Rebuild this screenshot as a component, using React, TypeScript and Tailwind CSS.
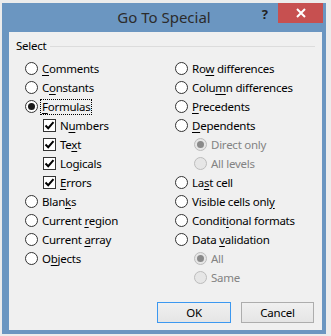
import React from 'react';

type Item = {
  label: string;
  key?: number; // index of the underlined access key
  kind: 'radio' | 'check';
  checked?: boolean;
  disabled?: boolean;
  sub?: boolean;
  focus?: boolean;
};

const leftItems: Item[] = [
  { label: 'Comments', key: 0, kind: 'radio' },
  { label: 'Constants', key: 1, kind: 'radio' },
  { label: 'Formulas', key: 0, kind: 'radio', checked: true, focus: true },
  { label: 'Numbers', key: 1, kind: 'check', checked: true, sub: true },
  { label: 'Text', key: 2, kind: 'check', checked: true, sub: true },
  { label: 'Logicals', key: 2, kind: 'check', checked: true, sub: true },
  { label: 'Errors', key: 0, kind: 'check', checked: true, sub: true },
  { label: 'Blanks', key: 4, kind: 'radio' },
  { label: 'Current region', key: 8, kind: 'radio' },
  { label: 'Current array', key: 8, kind: 'radio' },
  { label: 'Objects', key: 1, kind: 'radio' },
];

const rightItems: Item[] = [
  { label: 'Row differences', key: 2, kind: 'radio' },
  { label: 'Column differences', key: 4, kind: 'radio' },
  { label: 'Precedents', key: 0, kind: 'radio' },
  { label: 'Dependents', key: 0, kind: 'radio' },
  { label: 'Direct only', kind: 'radio', checked: true, disabled: true, sub: true },
  { label: 'All levels', kind: 'radio', disabled: true, sub: true },
  { label: 'Last cell', key: 2, kind: 'radio' },
  { label: 'Visible cells only', key: 17, kind: 'radio' },
  { label: 'Conditional formats', key: 6, kind: 'radio' },
  { label: 'Data validation', key: 5, kind: 'radio' },
  { label: 'All', kind: 'radio', checked: true, disabled: true, sub: true },
  { label: 'Same', kind: 'radio', disabled: true, sub: true },
];

const Radio = ({ checked, disabled }: { checked?: boolean; disabled?: boolean }) => (
  <span
    className={`w-[13px] h-[13px] rounded-full border flex items-center justify-center shrink-0 ${
      disabled ? 'border-[#bcbcbc] bg-[#e6e6e6]' : 'border-[#333333] bg-white'
    }`}
  >
    {checked && (
      <span className={`w-[7px] h-[7px] rounded-full ${disabled ? 'bg-[#8a8a8a]' : 'bg-[#1a1a1a]'}`} />
    )}
  </span>
);

const Check = ({ checked }: { checked?: boolean }) => (
  <span className="w-[13px] h-[13px] border border-[#333333] bg-white flex items-center justify-center shrink-0">
    {checked && (
      <svg width="11" height="11" viewBox="0 0 11 11">
        <path d="M1.5 5.5 L4.2 8.2 L9.5 2.2" fill="none" stroke="#000" strokeWidth="2" />
      </svg>
    )}
  </span>
);

const Label = ({ item }: { item: Item }) => {
  const { label, key } = item;
  const text =
    key === undefined ? (
      label
    ) : (
      <>
        {label.slice(0, key)}
        <u className="underline underline-offset-2">{label[key]}</u>
        {label.slice(key + 1)}
      </>
    );
  return (
    <span
      className={`ml-[2px] px-[1px] border leading-[14px] whitespace-nowrap ${
        item.focus ? 'border-dotted border-black' : 'border-transparent'
      } ${item.disabled ? 'text-[#838383]' : 'text-black'}`}
    >
      {text}
    </span>
  );
};

const Row = ({ item, subIndent }: { item: Item; subIndent: string }) => (
  <div className={`h-[19px] flex items-center ${item.sub ? subIndent : ''}`}>
    {item.kind === 'radio' ? (
      <Radio checked={item.checked} disabled={item.disabled} />
    ) : (
      <Check checked={item.checked} />
    )}
    <Label item={item} />
  </div>
);

const Button = ({ children, primary, width }: { children: React.ReactNode; primary?: boolean; width: string }) => (
  <button
    className={`${width} h-[21px] border bg-gradient-to-b from-[#f0f0f0] to-[#e5e5e5] text-black flex items-center justify-center ${
      primary ? 'border-[#3c98f0]' : 'border-[#adadad]'
    }`}
  >
    {children}
  </button>
);

export default function App() {
  return (
    <div
      className="w-[331px] h-[336px] bg-[#ececec] pl-[2px] pt-[3px] overflow-hidden"
      style={{ fontFamily: '"Noto Sans", "Open Sans", sans-serif' }}
    >
      <div className="w-[324px] h-[331px] bg-[#6b96c1] flex flex-col">
        {/* Title bar */}
        <div className="h-[29px] grid grid-cols-[1fr_auto_1fr]">
          <div />
          <div className="text-[15px] text-[#2b2b2b] pt-[4px] leading-[20px]">Go To Special</div>
          <div className="flex justify-end items-start pr-[3px]">
            <span className="text-[13px] font-bold text-[#222] mt-[3px] mr-[10px] leading-[16px]">?</span>
            <div className="w-[45px] h-[20px] bg-[#c75050] flex items-center justify-center">
              <svg width="10" height="10" viewBox="0 0 10 10">
                <path d="M1 1 L9 9 M9 1 L1 9" stroke="#fff" strokeWidth="2" />
              </svg>
            </div>
          </div>
        </div>

        {/* Client area */}
        <div className="ml-[7px] mr-[4px] mb-[4px] flex-1 bg-[#f0f0f0] flex flex-col text-[11.5px] tracking-[-0.25px]">
          <div className="pt-[6px] pl-[7px] pr-[7px] h-[16px] flex items-center gap-[4px] box-content">
            <span className="text-black leading-[16px]">Select</span>
            <div className="flex-1 h-px bg-[#dcdcdc]" />
          </div>
          <div className="mt-[5px] pl-[16px] grid grid-cols-[150px_1fr]">
            <div className="flex flex-col">
              {leftItems.map((it) => (
                <Row key={it.label} item={it} subIndent="pl-[18px]" />
              ))}
            </div>
            <div className="flex flex-col">
              {rightItems.map((it) => (
                <Row key={it.label} item={it} subIndent="pl-[19px]" />
              ))}
            </div>
          </div>
          <div className="mt-auto flex justify-end gap-[10px] pr-[8px] pb-[7px]">
            <Button primary width="w-[74px]">OK</Button>
            <Button width="w-[73px]">Cancel</Button>
          </div>
        </div>
      </div>
    </div>
  );
}
